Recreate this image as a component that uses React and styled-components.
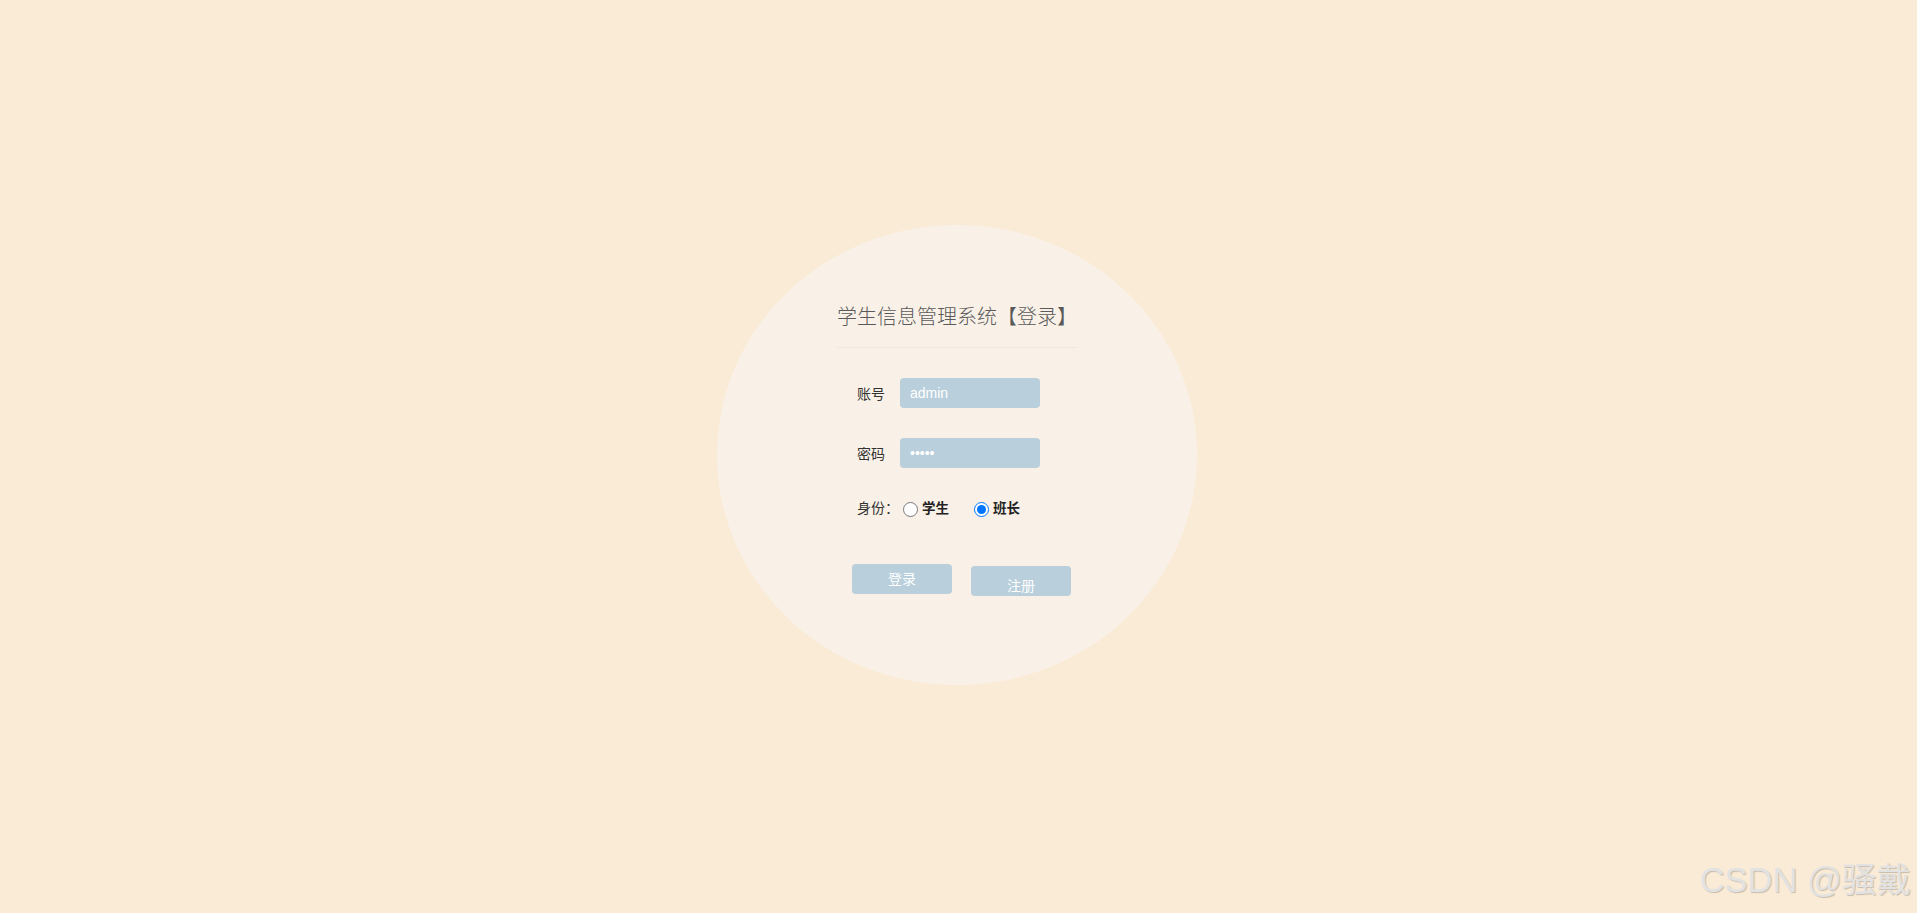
import React from 'react'
import styled, { createGlobalStyle } from 'styled-components'

const GlobalStyle = createGlobalStyle`
  html, body {
    margin: 0;
    padding: 0;
    height: 100%;
  }
  body {
    background: #faebd7;
    font-family: 'Liberation Sans', 'Noto Sans CJK SC', sans-serif;
  }
  #root {
    height: 100%;
  }
`

const Page = styled.div`
  position: relative;
  height: 100vh;
  display: flex;
  align-items: center;
  justify-content: center;
  overflow: hidden;
`

const Circle = styled.div`
  width: 480px;
  height: 460px;
  margin: 0 0 3px -3px;
  border-radius: 50%;
  background: #f9f1e7;
  display: flex;
  flex-direction: column;
  align-items: center;
  padding-top: 76px;
  box-sizing: border-box;
`

const Head = styled.div`
  width: 240px;
  border-bottom: 1px solid #f2e6dc;
  padding-bottom: 16px;
`

const Title = styled.h2`
  margin: 0;
  font-family: 'Noto Sans CJK SC', sans-serif;
  font-size: 20px;
  line-height: 30px;
  font-weight: 300;
  color: #5a5a5a;
  white-space: nowrap;
`

const Form = styled.form`
  width: 240px;
  padding: 30px 0 0 20px;
  box-sizing: border-box;
  display: flex;
  flex-direction: column;
`

const Row = styled.div`
  display: flex;
  align-items: center;
  height: 30px;
  margin-bottom: 30px;
`

const Label = styled.label`
  width: 43px;
  font-size: 14px;
  color: #333;
`

const Input = styled.input`
  width: 140px;
  height: 30px;
  border: none;
  border-radius: 4px;
  background: #b9cfdc;
  color: #fff;
  font-size: 14px;
  font-family: 'Liberation Sans', 'Noto Sans CJK SC', sans-serif;
  padding: 0 10px;
  box-sizing: border-box;
  outline: none;
`

const RoleRow = styled.div`
  display: flex;
  align-items: center;
  height: 20px;
  margin-top: -1px;
  margin-bottom: 47px;
`

const RoleLabel = styled.span`
  font-size: 14px;
  color: #333;
  width: 42px;
`

const Radio = styled.input`
  width: 15px;
  height: 15px;
  margin: 4px 4px 0 4px;
`

const Choice = styled.label`
  display: flex;
  align-items: center;
  margin-right: ${(props) => props.gap || 0}px;
  font-size: 13.5px;
  font-weight: bold;
  color: #222;
`

const Buttons = styled.div`
  display: flex;
  align-items: flex-start;
  gap: 19px;
  margin-left: -5px;
`

const Button = styled.button`
  width: 100px;
  height: 30px;
  border: none;
  border-radius: 4px;
  background: #b9cfdc;
  color: #fff;
  font-size: 14px;
  font-family: 'Liberation Sans', 'Noto Sans CJK SC', sans-serif;
  margin-top: ${(props) => (props.low ? 2 : 0)}px;
  padding: ${(props) => (props.low ? '8px 0 0' : '0 0 2px')};
  box-sizing: border-box;
`

const Watermark = styled.div`
  position: absolute;
  right: 6px;
  bottom: 11px;
  font-size: 34.5px;
  color: #e2e2e2;
  text-shadow: 1px 1px 1px rgba(0, 0, 0, 0.2);
  font-family: 'Liberation Sans', 'Noto Sans CJK SC', sans-serif;
`

const App = () => {
  return (
    <>
      <GlobalStyle />
      <Page>
        <Circle>
          <Head>
            <Title>学生信息管理系统【登录】</Title>
          </Head>
          <Form onSubmit={(event) => event.preventDefault()}>
            <Row>
              <Label>账号</Label>
              <Input type='text' defaultValue='admin' />
            </Row>
            <Row>
              <Label>密码</Label>
              <Input type='password' defaultValue='12345' />
            </Row>
            <RoleRow>
              <RoleLabel>身份：</RoleLabel>
              <Choice gap={21}>
                <Radio type='radio' name='role' value='student' />
                学生
              </Choice>
              <Choice>
                <Radio type='radio' name='role' value='monitor' defaultChecked />
                班长
              </Choice>
            </RoleRow>
            <Buttons>
              <Button type='button'>登录</Button>
              <Button type='button' low>
                注册
              </Button>
            </Buttons>
          </Form>
        </Circle>
        <Watermark>CSDN @骚戴</Watermark>
      </Page>
    </>
  )
}

export default App
